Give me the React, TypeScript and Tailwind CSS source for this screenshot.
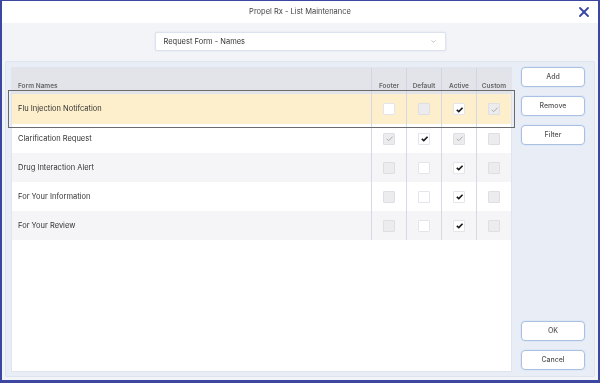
import { X, ChevronDown } from "lucide-react";

type Box = { on: boolean; enabled: boolean };

const rows: { name: string; boxes: Box[] }[] = [
  {
    name: "Flu Injection Notifcation",
    boxes: [
      { on: false, enabled: true },
      { on: false, enabled: false },
      { on: true, enabled: true },
      { on: true, enabled: false },
    ],
  },
  {
    name: "Clarification Request",
    boxes: [
      { on: true, enabled: false },
      { on: true, enabled: true },
      { on: true, enabled: false },
      { on: false, enabled: false },
    ],
  },
  {
    name: "Drug Interaction Alert",
    boxes: [
      { on: false, enabled: false },
      { on: false, enabled: true },
      { on: true, enabled: true },
      { on: false, enabled: false },
    ],
  },
  {
    name: "For Your Information",
    boxes: [
      { on: false, enabled: false },
      { on: false, enabled: true },
      { on: true, enabled: true },
      { on: false, enabled: false },
    ],
  },
  {
    name: "For Your Review",
    boxes: [
      { on: false, enabled: false },
      { on: false, enabled: true },
      { on: true, enabled: true },
      { on: false, enabled: false },
    ],
  },
];

const cols = ["Footer", "Default", "Active", "Custom"];

function Check({ on, enabled }: Box) {
  return (
    <div
      className={
        enabled
          ? "w-[12px] h-[12px] bg-white border border-[#e4e5ea] rounded-[1px] flex items-center justify-center"
          : "w-[12px] h-[12px] bg-[#ececee] border border-[#dedfe4] rounded-[1px] flex items-center justify-center"
      }
    >
      {on && (
        <svg width="9" height="9" viewBox="0 0 10 10">
          <path
            d="M2 5.4 L4.2 7.4 L8.4 3"
            fill="none"
            stroke={enabled ? "#1a1a1a" : "#a8a9ae"}
            strokeWidth={enabled ? 1.8 : 1.1}
          />
        </svg>
      )}
    </div>
  );
}

function Btn({ label }: { label: string }) {
  return (
    <button className="w-[64px] h-[20px] bg-white border border-[#a9c0e4] rounded-[4px] text-[7px] font-medium text-[#555] shadow-[0_0_0_1px_#dfe8f5]">
      {label}
    </button>
  );
}

export default function App() {
  return (
    <div className="w-[600px] h-[383px] overflow-hidden blur-[0.6px]" style={{ fontFamily: "Inter, 'Open Sans', sans-serif" }}>
      <div className="w-full h-full flex flex-col border-x-2 border-t border-b-[3px] border-[#3b47a0] bg-[#f3f4f8]">
        {/* title bar */}
        <div className="relative h-[22px] bg-white flex items-center justify-center shrink-0">
          <span className="text-[7.5px] text-[#444]">Propel Rx - List Maintenance</span>
          <X className="absolute right-[6px] top-[3px] w-[16px] h-[16px] text-[#3b47a0]" strokeWidth={2.8} />
        </div>

        {/* dropdown */}
        <div className="flex justify-center pt-[9px] pb-[10px] shrink-0">
          <div className="w-[291px] h-[19px] bg-white border border-[#dde2ee] rounded-[2px] flex items-center justify-between px-[8px] shadow-[0_0_2px_#d6dcea]">
            <span className="text-[7.5px] text-[#333]">Request Form - Names</span>
            <ChevronDown className="w-[7px] h-[7px] text-[#999]" />
          </div>
        </div>

        {/* main panel */}
        <div className="flex-1 mx-[3px] mb-[3px] bg-[#e8edf6] border border-[#dde4f0] rounded-[2px] flex p-[5px] pb-[4px] gap-[5px]">
          <div className="flex-1 bg-white border border-[#dfe5f0] flex flex-col">
            <div className="flex flex-col w-[499px]">
              {/* header */}
              <div className="flex h-[26px] bg-[#e3e4ea] text-[6.5px] font-semibold text-[#666]">
                <div className="flex-1 flex items-end pl-[6px] pb-[2px]">Form Names</div>
                {cols.map((c) => (
                  <div key={c} className="w-[35px] border-l border-[#d3d5e2] flex items-end justify-center pb-[2px]">
                    {c}
                  </div>
                ))}
              </div>
              {rows.map((r, i) => (
                <div
                  key={r.name}
                  className={
                    i === 0
                      ? "relative flex h-[30px] bg-[#fdefcc] outline outline-1 outline-[#6b6b6b] outline-offset-[3px] z-10"
                      : i % 2 === 0
                        ? "flex h-[29px] bg-[#f5f5f7]"
                        : "flex h-[29px] bg-white"
                  }
                >
                  <div className="flex-1 flex items-center pl-[6px] text-[7.5px] text-[#333]">{r.name}</div>
                  {r.boxes.map((b, j) => (
                    <div key={j} className="w-[35px] border-l border-[#d6d8e3] flex items-center justify-center">
                      <Check {...b} />
                    </div>
                  ))}
                </div>
              ))}
            </div>
          </div>

          <div className="w-[72px] flex flex-col items-center justify-between pt-[0px] pb-[2px]">
            <div className="flex flex-col gap-[9px]">
              <Btn label="Add" />
              <Btn label="Remove" />
              <Btn label="Filter" />
            </div>
            <div className="flex flex-col gap-[9px]">
              <Btn label="OK" />
              <Btn label="Cancel" />
            </div>
          </div>
        </div>
      </div>
    </div>
  );
}
